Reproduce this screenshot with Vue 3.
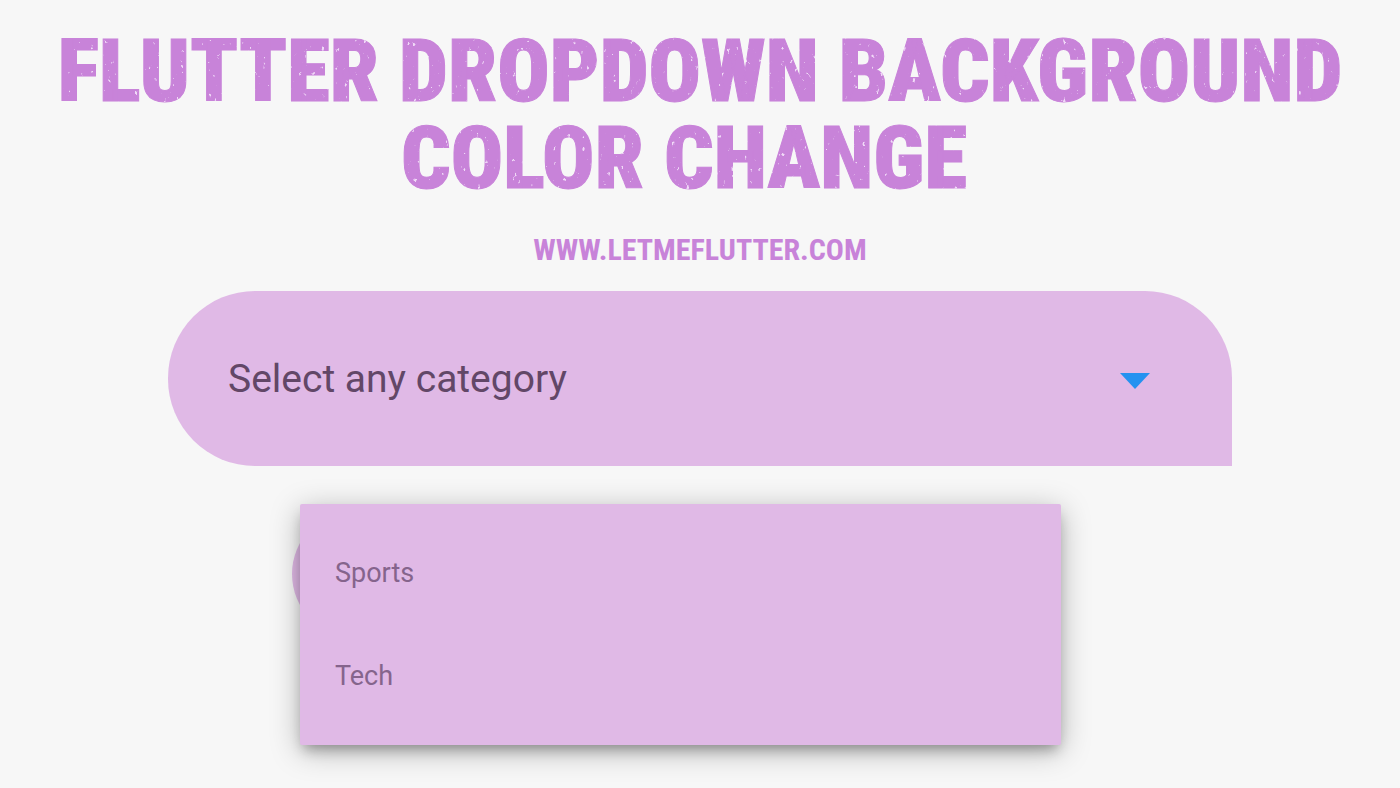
<script setup>
  import { ref } from 'vue';

  const categories = ['Sports', 'Tech'];
  const selected = ref('');

  const choose = (category) => {
    selected.value = category;
  };
</script>

<template>
  <main class="page">
    <!-- worn print effect for the title: pale specks inside the letters -->
    <svg class="defs" width="0" height="0" aria-hidden="true">
      <filter id="worn" x="0" y="0" width="100%" height="100%" color-interpolation-filters="sRGB">
        <feTurbulence type="fractalNoise" baseFrequency="0.22 0.16" numOctaves="3" seed="7" result="noise" />
        <feColorMatrix
          in="noise"
          type="matrix"
          values="0 0 0 0 0.94  0 0 0 0 0.85  0 0 0 0 0.97  12 0 0 0 -8.7"
          result="specks"
        />
        <feComposite in="specks" in2="SourceGraphic" operator="in" result="inside" />
        <feMerge>
          <feMergeNode in="SourceGraphic" />
          <feMergeNode in="inside" />
        </feMerge>
      </filter>
    </svg>

    <h1 class="title">
      <span class="line">Flutter Dropdown Background</span>
      <span class="line line-short">Color Change</span>
    </h1>
    <a class="site" href="#">www.letmeflutter.com</a>

    <div class="dropdown">
      <div class="field">
        <select v-model="selected" class="select" aria-label="Category">
          <option value="" disabled>Select any category</option>
          <option v-for="category in categories" :key="category" :value="category">{{ category }}</option>
        </select>
        <svg class="arrow" viewBox="0 0 30 16" aria-hidden="true">
          <path d="M0 0h30L15 16z" />
        </svg>
      </div>

      <div class="menu-wrap">
        <ul class="menu">
          <li v-for="category in categories" :key="category">
            <button type="button" class="item" @click="choose(category)">{{ category }}</button>
          </li>
        </ul>
      </div>
    </div>
  </main>
</template>

<style>
body {
  background: #f7f7f7;
}
</style>

<style scoped>
.page {
  display: flex;
  flex-direction: column;
  align-items: center;
  padding: 28px 0 43px;
  font-family: Roboto, sans-serif;
}
.defs {
  position: absolute;
}
.title {
  margin: 0;
  font-family: "Roboto Condensed", "Liberation Sans Narrow", sans-serif;
  font-size: 87px;
  line-height: 87px;
  font-weight: 900;
  text-align: center;
  text-transform: uppercase;
  white-space: nowrap;
  color: #c883d9;
  -webkit-text-stroke: 1px #c883d9;
  filter: url(#worn);
}
.line {
  display: block;
}
.line-short {
  padding-right: 32px;
}
.site {
  margin-top: 28px;
  font-family: "Roboto Condensed", "Liberation Sans Narrow", sans-serif;
  font-size: 30px;
  line-height: 40px;
  font-weight: 700;
  text-transform: uppercase;
  text-decoration: none;
  color: #c883d9;
}
.dropdown {
  width: 76%;
  margin-top: 21px;
}
.field {
  position: relative;
}
.select {
  display: block;
  width: 100%;
  height: 175px;
  padding: 0 60px;
  border: none;
  border-radius: 87px 87px 0 87px;
  background: #e0b9e6;
  color: #624767;
  font-family: inherit;
  font-size: 39px;
  appearance: none;
}
.arrow {
  position: absolute;
  top: 82px;
  right: 82px;
  width: 30px;
  height: 16px;
  fill: #2592f0;
  pointer-events: none;
}
.menu-wrap {
  position: relative;
  margin: 38px 171px 0 132px;
}
/* rounded end of the field that sits under the open menu */
.menu-wrap::before {
  content: "";
  position: absolute;
  top: 6px;
  left: -8px;
  width: 128px;
  height: 128px;
  border-radius: 50%;
  background: #e0b9e6;
}
.menu {
  position: relative;
  margin: 0;
  padding: 17px 0 18px;
  list-style: none;
  border-radius: 2px;
  background: #e0b9e6;
  box-shadow:
    0 8px 12px -4px rgba(0, 0, 0, 0.3),
    0 6px 30px rgba(0, 0, 0, 0.28);
}
.item {
  display: block;
  width: 100%;
  height: 103px;
  padding: 0 35px;
  border: none;
  background: none;
  color: #85648c;
  font-family: inherit;
  font-size: 27px;
  text-align: left;
}
</style>
